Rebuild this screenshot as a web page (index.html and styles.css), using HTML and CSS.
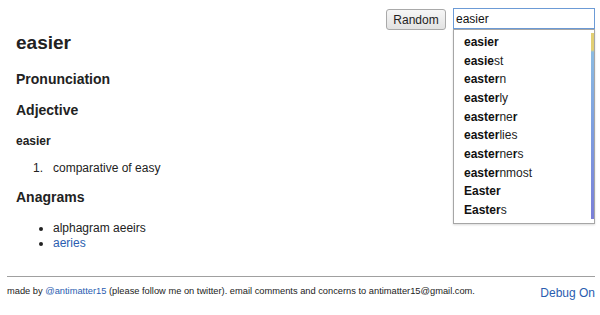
FILE: index.html
```html
<!DOCTYPE html>
<html>
<head>
<meta charset="utf-8">
<link rel="stylesheet" href="styles.css">
</head>
<body>
<div class="top">
  <button class="btn">Random</button>
  <div class="search">
    <input class="query" type="text" value="easier">
    <div class="dropdown">
      <div class="item"><b>easier</b></div>
      <div class="item"><b>easie</b>st</div>
      <div class="item"><b>easter</b>n</div>
      <div class="item"><b>easter</b>ly</div>
      <div class="item"><b>easter</b>ne<b>r</b></div>
      <div class="item"><b>easter</b>lies</div>
      <div class="item"><b>easter</b>ne<b>r</b>s</div>
      <div class="item"><b>easter</b>nmost</div>
      <div class="item"><b>Easter</b></div>
      <div class="item"><b>Easter</b>s</div>
      <div class="rail"></div>
    </div>
  </div>
</div>
<div class="main">
  <h1 class="title">easier</h1>
  <h2 class="section first">Pronunciation</h2>
  <h2 class="section">Adjective</h2>
  <h4 class="headword">easier</h4>
  <ol class="defs">
    <li>comparative of easy</li>
  </ol>
  <h2 class="section last">Anagrams</h2>
  <ul class="anagrams">
    <li>alphagram aeeirs</li>
    <li><a class="link" href="#">aeries</a></li>
  </ul>
</div>
<hr class="rule">
<div class="footer">
  <div class="credits">made by <a class="link" href="#">@antimatter15</a> (please follow me on twitter). email comments and concerns to antimatter15@gmail.com.</div>
  <a class="debug" href="#">Debug On</a>
</div>
</body>
</html>
```
FILE: styles.css
```css
html, body {
  margin: 0;
  padding: 0;
  background: #fff;
}
body {
  font-family: "Liberation Sans", Arial, sans-serif;
  color: #222;
  font-size: 12px;
}
.top {
  display: flex;
  justify-content: flex-end;
  align-items: flex-start;
  gap: 7px;
  padding: 8px 5px 0 0;
  height: 22px;
}
.btn {
  margin-top: 1px;
  width: 60px;
  height: 21px;
  padding: 0;
  font-family: "Liberation Sans", Arial, sans-serif;
  font-size: 12px;
  color: #222;
  background: linear-gradient(#f6f6f6, #e2e2e2);
  border: 1px solid #a9a9a9;
  border-radius: 3px;
}
.search {
  position: relative;
  width: 142px;
}
.query {
  box-sizing: border-box;
  width: 142px;
  height: 21px;
  margin: 0;
  padding: 0 2px;
  font-family: "Liberation Sans", Arial, sans-serif;
  font-size: 12px;
  color: #111;
  border: 1px solid #6c9bd6;
  outline: none;
}
.dropdown {
  position: absolute;
  left: 0;
  top: 21px;
  box-sizing: border-box;
  width: 142px;
  height: 195px;
  padding: 3px 0 0 10px;
  background: #fff;
  border: 1px solid #a6a6a6;
  box-shadow: 0 1px 2px rgba(0,0,0,0.15);
}
.item {
  height: 18.67px;
  line-height: 18.67px;
  font-size: 12px;
  color: #222;
  white-space: nowrap;
}
.item b {
  color: #111;
}
.rail {
  position: absolute;
  right: 0;
  top: 3px;
  width: 3px;
  height: 186px;
  background: linear-gradient(#e2cf73 0, #e2cf73 17px, #8bbbe2 19px, #7d9fe0 50%, #7a7fd8 100%);
}
.main {
  padding-left: 16px;
}
.title {
  font-size: 19px;
  line-height: 22px;
  margin: 2px 0 0;
}
.section {
  font-size: 14px;
  line-height: 17px;
  margin: 14px 0 0;
}
.section.first {
  margin-top: 17px;
}
.section.last {
  margin-top: 13px;
}
.headword {
  font-size: 12px;
  line-height: 15px;
  margin: 15px 0 0;
}
.defs {
  margin: 12px 0 0;
  padding-left: 37px;
  line-height: 15px;
}
.defs li::marker {
  content: "1.\00a0\00a0\00a0";
}
.anagrams {
  margin: 15px 0 0;
  padding-left: 37px;
  line-height: 15px;
}
.link {
  color: #2a5db0;
  text-decoration: none;
}
.rule {
  margin: 25px 5px 0 7px;
  border: 0;
  border-top: 1px solid #a0a0a0;
  height: 0;
}
.footer {
  display: flex;
  justify-content: space-between;
  align-items: center;
  padding: 5px 5px 0 7px;
}
.credits {
  font-size: 9.3px;
  line-height: 12px;
}
.debug {
  font-size: 12px;
  color: #2a5db0;
  text-decoration: none;
  margin-top: 4px;
}
```
